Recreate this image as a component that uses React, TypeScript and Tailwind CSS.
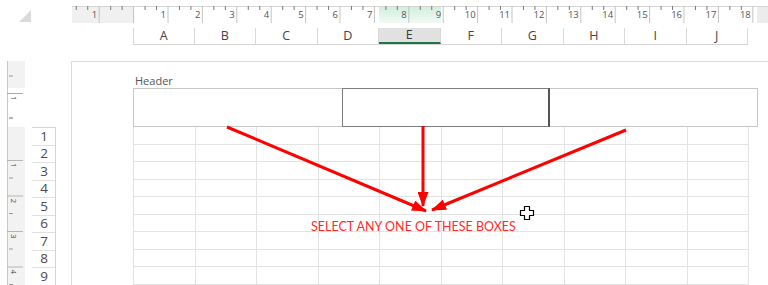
import React from 'react'

const COLS = ['A', 'B', 'C', 'D', 'E', 'F', 'G', 'H', 'I', 'J']
const ROWS = [1, 2, 3, 4, 5, 6, 7, 8, 9]

// top ruler, drawn in its own coordinate space (x = page x - 72)
function TopRuler() {
  const unit = 34.4
  const origin = 133.6 - 72
  const ticks: { x: number; major: boolean; label?: string }[] = []
  for (let i = -6; i <= 54; i++) {
    const x = origin + (i * unit) / 3
    if (x < 0 || x > 690) continue
    const major = i % 3 === 0
    const n = Math.abs(i / 3)
    ticks.push({ x, major, label: major && i !== 0 ? String(n) : undefined })
  }
  return (
    <svg width="696" height="17" className="block">
      <defs>
        <linearGradient id="sel" x1="0" y1="0" x2="0" y2="1">
          <stop offset="0" stopColor="#cfeedb" />
          <stop offset="1" stopColor="#f2faf5" />
        </linearGradient>
      </defs>
      <rect x="0" y="0" width="61" height="17" fill="#f0f0f0" />
      <rect x="685" y="0" width="11" height="17" fill="#ececec" />
      <rect x="307" y="0" width="62" height="17" fill="url(#sel)" />
      <line x1="0" y1="0.5" x2="696" y2="0.5" stroke="#d6d6d6" />
      {ticks.map((t, i) => (
        <g key={i}>
          <line
            x1={t.x}
            x2={t.x}
            y1={0}
            y2={t.major ? 17 : 4}
            stroke={t.major ? '#c4c4c4' : '#7a7a7a'}
            strokeWidth={1}
          />
          {t.label && (
            <text
              x={t.x - 2}
              y={12}
              textAnchor="end"
              fontSize="9.5"
              fill="#555"
              fontFamily="'Open Sans', 'Liberation Sans', sans-serif"
            >
              {t.label}
            </text>
          )}
        </g>
      ))}
    </svg>
  )
}

function SideRuler() {
  const marks = [160, 195.5, 231, 266.5]
  return (
    <svg width="18" height="224" className="block">
      {/* page y = svg y + 61 */}
      <rect x="0" y="0" width="18" height="224" fill="#f2f2f2" />
      <rect x="0" y="27" width="18" height="39" fill="#ffffff" />
      <line x1="0.5" y1="0" x2="0.5" y2="224" stroke="#c9c9c9" />
      <line x1="2" y1="15" x2="6" y2="15" stroke="#9a9a9a" />
      <line x1="0" y1="32.5" x2="16" y2="32.5" stroke="#aaaaaa" />
      <text
        x="0"
        y="0"
        fontSize="8"
        fill="#444"
        transform="translate(4 35) rotate(90)"
        fontFamily="'Open Sans', 'Liberation Sans', sans-serif"
      >
        1
      </text>
      <line x1="2" y1="57" x2="6" y2="57" stroke="#9a9a9a" />
      {marks.map((m, i) => (
        <g key={i}>
          <line x1="0" y1={m - 61 + 0.5} x2="16" y2={m - 61 + 0.5} stroke="#b5b5b5" />
          <text
            x="0"
            y="0"
            fontSize="8"
            fill="#444"
            transform={`translate(4 ${m - 61 + 3}) rotate(90)`}
            fontFamily="'Open Sans', 'Liberation Sans', sans-serif"
          >
            {i + 1}
          </text>
          <line x1="2" y1={m - 61 + 18} x2="6" y2={m - 61 + 18} stroke="#9a9a9a" />
        </g>
      ))}
      <line x1="2" y1={110 - 61 + 8} x2="6" y2={110 - 61 + 8} stroke="#9a9a9a" />
    </svg>
  )
}

function Overlay() {
  return (
    <svg width="768" height="285" className="absolute left-0 top-0 pointer-events-none">
      <defs>
        <marker
          id="head"
          viewBox="0 0 15 11"
          refX="14"
          refY="5.5"
          markerWidth="15"
          markerHeight="11"
          markerUnits="userSpaceOnUse"
          orient="auto"
        >
          <path d="M0 0 L15 5.5 L0 11 Z" fill="#ff0000" />
        </marker>
      </defs>
      <line x1="227" y1="127" x2="426" y2="211" stroke="#ff0000" strokeWidth="3" markerEnd="url(#head)" />
      <line x1="423" y1="126" x2="423" y2="206" stroke="#ff0000" strokeWidth="3" markerEnd="url(#head)" />
      <line x1="626" y1="130" x2="432" y2="210" stroke="#ff0000" strokeWidth="3" markerEnd="url(#head)" />
    </svg>
  )
}

function MoveCursor() {
  return (
    <svg width="16" height="16" viewBox="0 0 16 16" className="absolute left-[519px] top-[205px]">
      <path
        d="M5.5 1.5 H10.5 V5.5 H14.5 V10.5 H10.5 V14.5 H5.5 V10.5 H1.5 V5.5 H5.5 Z"
        fill="#ffffff"
        stroke="#000000"
        strokeWidth="1.2"
        strokeLinejoin="round"
      />
    </svg>
  )
}

export default function App() {
  return (
    <div className="relative w-[768px] h-[285px] overflow-hidden bg-white font-['Open_Sans','Liberation_Sans',sans-serif]">
      {/* ruler strip */}
      <div className="flex h-[28px]">
        <div className="w-[72px] pl-[19px] pt-[10px]">
          <svg width="12" height="12" className="block">
            <path d="M12 0 L12 12 L0 12 Z" fill="#dadada" />
          </svg>
        </div>
        <div className="pt-[6px]">
          <TopRuler />
        </div>
      </div>

      {/* column headings */}
      <div className="flex h-[17px]">
        <div className="w-[133px] shrink-0" />
        <div className="grid grid-cols-[repeat(10,61.5px)] border-b border-[#d4d4d4]">
          {COLS.map((c) => (
            <div
              key={c}
              className={`flex items-center justify-center text-[12.5px] leading-none border-r border-[#d9d9d9] ${
                c === 'A' ? 'border-l' : ''
              } ${c === 'E' ? 'bg-[#e1e1e1] text-[#3a3a3a] border-b-2 border-b-[#217346]' : 'text-[#444]'}`}
            >
              {c}
            </div>
          ))}
        </div>
      </div>

      {/* body */}
      <div className="flex mt-[16px] h-[224px]">
        <div className="w-[7px] shrink-0" />
        <SideRuler />
        <div className="w-[7px] shrink-0" />
        <div className="w-[24px] shrink-0 pt-[66px]">
          <div className="border-t border-r border-[#d4d4d4]">
            {ROWS.map((r) => (
              <div
                key={r}
                className="h-[17.5px] flex items-center justify-center pl-[1px] text-[13.5px] leading-none text-[#4a4a4a] border-b border-[#e0e0e0]"
              >
                {r}
              </div>
            ))}
          </div>
        </div>
        <div className="w-[15px] shrink-0" />

        {/* page */}
        <div className="flex-1 border-l border-t border-[#dcdcdc] pl-[61px] pt-[12px]">
          <div className="text-[11px] leading-[14px] text-[#555] pl-[2px]">Header</div>
          <div className="flex w-[625px] h-[39px] border border-[#c6c6c6]">
            <div className="w-[208px]" />
            <div className="w-[208px] -my-px border-[1.5px] border-[#7d7d7d] border-r-2 border-r-[#555]" />
            <div className="flex-1" />
          </div>
          <div className="w-[616px] border-l border-[#e0e0e0]">
            {ROWS.map((r) => (
              <div key={r} className="grid grid-cols-[repeat(10,61.5px)] h-[17.5px] border-b border-[#e3e3e3]">
                {COLS.map((c) => (
                  <div key={c} className="border-r border-[#e3e3e3]" />
                ))}
              </div>
            ))}
          </div>
        </div>
      </div>

      <Overlay />
      <div className="absolute left-[311px] top-[219px] text-[12.5px] leading-[15px] text-[#ff2b2b] font-['Lato','Liberation_Sans',sans-serif] whitespace-nowrap">
        SELECT ANY ONE OF THESE BOXES
      </div>
      <MoveCursor />
    </div>
  )
}
